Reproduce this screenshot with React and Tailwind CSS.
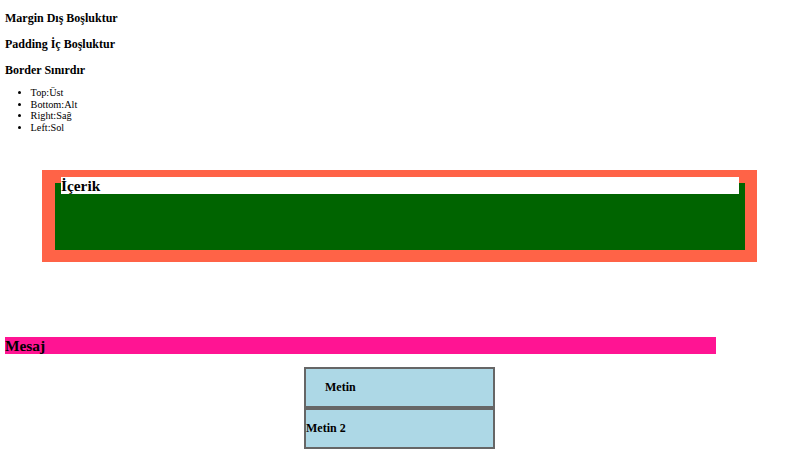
export default function App() {
  return (
    <div
      className="flex flex-col px-[5px] bg-white text-black min-h-[450px] overflow-hidden"
      style={{ fontFamily: '"Liberation Serif", "Times New Roman", serif' }}
    >
      <h3 className="mt-[11px] text-[12px] leading-[14px] font-bold">Margin Dış Boşluktur</h3>
      <h3 className="mt-[12px] text-[12px] leading-[14px] font-bold">Padding İç Boşluktur</h3>
      <h3 className="mt-[12px] text-[12px] leading-[14px] font-bold">Border Sınırdır</h3>
      <ul className="mt-[10px] list-disc pl-[25.6px] text-[10.24px] leading-[11.5px]">
        <li>Top:Üst</li>
        <li>Bottom:Alt</li>
        <li>Right:Sağ</li>
        <li>Left:Sol</li>
      </ul>
      <div className="mt-[36.5px] ml-[37px] w-[715px] bg-[#ff6347] pt-[13px] pl-[13px] pr-[12px] pb-[12px]">
        <div className="flex flex-col h-[67px] bg-[#006400]">
          <h2 className="-mt-[6px] mx-[6px] bg-white text-[15.36px] leading-[17px] font-bold">İçerik</h2>
        </div>
      </div>
      <h2 className="mt-[75px] w-[711px] bg-[#ff1493] text-[15.36px] leading-[17px] font-bold">Mesaj</h2>
      <div className="mt-[13px] ml-[299px] w-[191px] flex flex-col">
        <div className="border-2 border-[#666666] bg-[#add8e6] py-[12px] pl-[19px]">
          <h3 className="text-[12px] leading-[13px] font-bold">Metin</h3>
        </div>
        <div className="border-2 border-[#666666] bg-[#add8e6] py-[12px]">
          <h3 className="text-[12px] leading-[13px] font-bold">Metin 2</h3>
        </div>
      </div>
    </div>
  );
}
